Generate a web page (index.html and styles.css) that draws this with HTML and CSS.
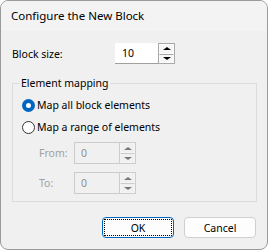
FILE: index.html
```html
<!DOCTYPE html>
<html lang="en">
<head>
  <meta charset="UTF-8" />
  <title>Configure the New Block</title>
  <link rel="stylesheet" href="styles.css">
</head>
<body>
  <div class="dialog">
    <div class="titlebar">Configure the New Block</div>

    <div class="content">
      <div class="size-row">
        <label class="size-label">Block size:</label>
        <div class="spin">
          <input type="text" class="spin-input" value="10" />
          <div class="spin-buttons">
            <span class="spin-btn"><span class="arrow-up"></span></span>
            <span class="spin-btn"><span class="arrow-down"></span></span>
          </div>
        </div>
      </div>

      <fieldset class="group">
        <legend>Element mapping</legend>
        <div class="radio-row">
          <span class="radio checked"></span>
          <span>Map all block elements</span>
        </div>
        <div class="radio-row">
          <span class="radio"></span>
          <span>Map a range of elements</span>
        </div>

        <div class="range-row">
          <label class="range-label">From:</label>
          <div class="spin disabled">
            <input type="text" class="spin-input" value="0" disabled />
            <div class="spin-buttons">
              <span class="spin-btn"><span class="arrow-up"></span></span>
              <span class="spin-btn"><span class="arrow-down"></span></span>
            </div>
          </div>
        </div>
        <div class="range-row">
          <label class="range-label">To:</label>
          <div class="spin disabled">
            <input type="text" class="spin-input" value="0" disabled />
            <div class="spin-buttons">
              <span class="spin-btn"><span class="arrow-up"></span></span>
              <span class="spin-btn"><span class="arrow-down"></span></span>
            </div>
          </div>
        </div>
      </fieldset>

      <div class="buttons">
        <button class="btn default"><span class="focus">OK</span></button>
        <button class="btn">Cancel</button>
      </div>
    </div>
  </div>
</body>
</html>
```

FILE: styles.css
```css
body {
  margin: 0;
  background-color: #ffffff;
  font-family: "Noto Sans", sans-serif;
  font-size: 10.5px;
  line-height: 16px;
  color: #000;
}
.dialog {
  width: 266px;
  height: 248px;
  border: 1px solid #9a9a9a;
  border-radius: 8px;
  background-color: #f0f0f0;
  overflow: hidden;
}
.titlebar {
  height: 30px;
  line-height: 30px;
  padding-left: 10px;
  background-color: #f3f3f3;
  font-size: 11.5px;
}
.content {
  padding: 12px 10px 0 11px;
}
.size-row {
  display: flex;
  align-items: center;
  height: 21px;
}
.size-label {
  width: 103px;
}
.spin {
  display: flex;
}
.spin-input {
  width: 43px;
  height: 21px;
  box-sizing: border-box;
  border: none;
  border-bottom: 1px solid #a0a0a0;
  background-color: #fff;
  padding: 0 0 0 7px;
  font-family: inherit;
  font-size: 10.5px;
  color: #000;
  outline: none;
}
.spin-buttons {
  display: flex;
  flex-direction: column;
  width: 17px;
  height: 21px;
  border: 1px solid #a8a8a8;
  box-sizing: border-box;
}
.spin-btn {
  flex: 1;
  display: flex;
  align-items: center;
  justify-content: center;
  background-color: #f6f6f6;
  border: 1px solid #fbfbfb;
}
.spin-btn + .spin-btn {
  border-top: 1px solid #a8a8a8;
}
.arrow-up, .arrow-down {
  width: 0;
  height: 0;
  border-left: 4px solid transparent;
  border-right: 4px solid transparent;
}
.arrow-up {
  border-bottom: 3px solid #000;
}
.arrow-down {
  border-top: 3px solid #000;
}
.group {
  margin: 11px 0 0 0;
  padding: 0 0 0 8px;
  width: 245px;
  height: 127px;
  box-sizing: border-box;
  border: 1px solid #dcdcdc;
}
.group legend {
  padding: 0 1px;
  margin-left: -1px;
}
.radio-row {
  display: flex;
  align-items: center;
  gap: 2px;
  height: 22px;
  margin-left: 1px;
}
.radio-row:first-of-type {
  margin-top: 3px;
}
.radio {
  width: 11px;
  height: 11px;
  border: 1px solid #333;
  border-radius: 50%;
  background-color: #fff;
}
.radio.checked {
  border: 4px solid #0067c0;
  width: 5px;
  height: 5px;
}
.range-row {
  display: flex;
  align-items: center;
  margin-top: 4px;
  padding-left: 18px;
}
.range-row + .range-row {
  margin-top: 8px;
}
.range-label {
  width: 35px;
  color: #a0a0a0;
}
.spin.disabled .spin-input {
  width: 45px;
  height: 22px;
  border: 1px solid #cccccc;
  border-right: none;
  background-color: #f0f0f0;
  color: #8f8f8f;
  padding-left: 6px;
}
.spin.disabled .spin-buttons {
  height: 22px;
  border-color: #cccccc;
}
.spin.disabled .spin-btn {
  background-color: #f0f0f0;
  border-color: #f4f4f4;
}
.spin.disabled .spin-btn + .spin-btn {
  border-top: 1px solid #cccccc;
}
.spin.disabled .arrow-up {
  border-bottom-color: #777;
}
.spin.disabled .arrow-down {
  border-top-color: #777;
}
.buttons {
  display: flex;
  justify-content: flex-end;
  gap: 10px;
  margin-top: 15px;
  padding-right: 1px;
}
.btn {
  width: 72px;
  height: 21px;
  padding: 0;
  border: 1px solid #d0d0d0;
  border-radius: 4px;
  background-color: #fdfdfd;
  font-family: inherit;
  font-size: 10.5px;
  color: #000;
}
.btn.default {
  border-color: #0067c0;
  padding: 1px;
}
.btn .focus {
  display: flex;
  align-items: center;
  justify-content: center;
  height: 100%;
  border: 1px dotted #000;
  box-sizing: border-box;
}
```
